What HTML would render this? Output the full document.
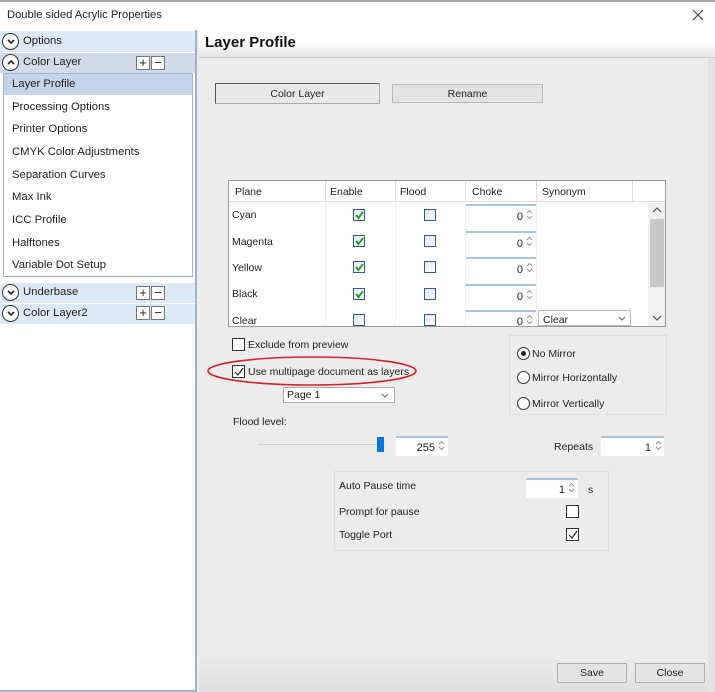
<!DOCTYPE html>
<html><head><meta charset="utf-8"><style>
*{margin:0;padding:0;box-sizing:border-box}
body{width:715px;height:692px;position:relative;overflow:hidden;background:#ececec;font-family:"Liberation Sans",sans-serif;font-size:10.5px;color:#222}
.a{position:absolute}
.t{position:absolute;white-space:nowrap}
.l{font-size:11.3px}
.cb{position:absolute;width:13px;height:13px;border:1px solid #333;background:#fff}
.gcb{position:absolute;width:12px;height:12px;border:1px solid #2b5f93;background:linear-gradient(135deg,#dfe6ee,#fff)}
.spin{position:absolute;background:#fff;border-top:2px solid #a7c4e0;text-align:right;font-size:11px}
.circ{position:absolute;width:17px;height:17px;border:1.5px solid #333;border-radius:50%;background:#fff}
.pm{position:absolute;width:14px;height:14px;border:1px solid #777;background:#fff;font-size:13px;line-height:11px;text-align:center;color:#222}
.rad{position:absolute;width:13px;height:13px;border:1px solid #333;border-radius:50%;background:#fff}
.ar{position:absolute}
</style></head><body>
<svg width="0" height="0" style="position:absolute"><defs><g id="ud"><path d="M1 4L3.5 1.5L6 4M1 7L3.5 9.5L6 7" stroke="#888" stroke-width="0.9" fill="none"/></g></defs></svg>
<div class="a" style="left:0;top:0;width:715px;height:2px;background:#aaa"></div>
<div class="a" style="left:0;top:2px;width:715px;height:28px;background:#fff"></div>
<div class="t" style="left:7px;top:9px;font-size:11.2px;color:#222">Double sided Acrylic Properties</div>
<svg class="a" style="left:692px;top:9px" width="12" height="12"><path d="M1 1L11 11M11 1L1 11" stroke="#444" stroke-width="1.2"/></svg>

<div class="a" style="left:0;top:30px;width:197px;height:662px;background:#fff;border-right:2px solid #9fb4cc;border-bottom:2px solid #9fb4cc"></div>
<div class="a" style="left:0;top:31px;width:195px;height:21px;background:#dce9f6"></div>
<div class="a" style="left:0;top:53px;width:195px;height:20px;background:#d0dce9"></div>
<div class="a" style="left:3px;top:73px;width:190px;height:204px;border:1px solid #9fb4cc;background:#fff"></div>
<div class="a" style="left:4px;top:74px;width:188px;height:21px;background:#c4d5ea"></div>
<div class="a" style="left:0;top:283px;width:195px;height:20px;background:#dce9f6"></div>
<div class="a" style="left:0;top:304px;width:195px;height:20px;background:#dce9f6"></div>
<div class="circ" style="left:2px;top:33px"></div><svg class="a" style="left:6px;top:39px" width="10" height="6"><path d="M2 1L5 4L8 1" stroke="#222" stroke-width="1.6" fill="none"/></svg>
<div class="circ" style="left:2px;top:54px"></div><svg class="a" style="left:6px;top:59px" width="10" height="6"><path d="M2 5L5 2L8 5" stroke="#222" stroke-width="1.6" fill="none"/></svg>
<div class="circ" style="left:2px;top:284px"></div><svg class="a" style="left:6px;top:290px" width="10" height="6"><path d="M2 1L5 4L8 1" stroke="#222" stroke-width="1.6" fill="none"/></svg>
<div class="circ" style="left:2px;top:305px"></div><svg class="a" style="left:6px;top:311px" width="10" height="6"><path d="M2 1L5 4L8 1" stroke="#222" stroke-width="1.6" fill="none"/></svg>
<div class="t l" style="left:23px;top:35px">Options</div>
<div class="t l" style="left:23px;top:56px">Color Layer</div>
<div class="t l" style="left:23px;top:286px">Underbase</div>
<div class="t l" style="left:23px;top:307px">Color Layer2</div>
<div class="pm" style="left:136px;top:56px">+</div><div class="pm" style="left:151px;top:56px">−</div>
<div class="pm" style="left:136px;top:286px">+</div><div class="pm" style="left:151px;top:286px">−</div>
<div class="pm" style="left:136px;top:306px">+</div><div class="pm" style="left:151px;top:306px">−</div>
<div class="t l" style="left:12px;top:78px">Layer Profile</div>
<div class="t l" style="left:12px;top:101px">Processing Options</div>
<div class="t l" style="left:12px;top:123px">Printer Options</div>
<div class="t l" style="left:12px;top:146px">CMYK Color Adjustments</div>
<div class="t l" style="left:12px;top:169px">Separation Curves</div>
<div class="t l" style="left:12px;top:191px">Max Ink</div>
<div class="t l" style="left:12px;top:214px">ICC Profile</div>
<div class="t l" style="left:12px;top:237px">Halftones</div>
<div class="t l" style="left:12px;top:259px">Variable Dot Setup</div>

<div class="a" style="left:199px;top:30px;width:516px;height:28px;background:linear-gradient(#fff,#fff 40%,#e4e4e4);border-bottom:1px solid #cfcfcf"></div>
<div class="t" style="left:205px;top:34px;font-size:15px;font-weight:bold;color:#111">Layer Profile</div>
<div class="a" style="left:708px;top:58px;width:7px;height:634px;background:#e2e2e2"></div>
<div class="a" style="left:199px;top:655px;width:509px;height:37px;background:linear-gradient(#ececec,#dedede)"></div>

<div class="a" style="left:215px;top:83px;width:165px;height:21px;border:1px solid #aaa;border-left:1px solid #555;border-top:1px solid #555;background:#e9e9e9"></div>
<div class="t" style="left:215px;top:88px;width:165px;text-align:center">Color Layer</div>
<div class="a" style="left:392px;top:84px;width:151px;height:19px;border:1px solid #b8b8b8;background:#e3e3e3"></div>
<div class="t" style="left:392px;top:88px;width:151px;text-align:center">Rename</div>

<div class="a" style="left:228px;top:180px;width:438px;height:147px;border:1px solid #999;background:#fff;overflow:hidden">
 <div class="a" style="left:0;top:0;width:438px;height:21px;background:#fff;border-bottom:1px solid #ddd"></div>
 <div class="a" style="left:96px;top:0;width:1px;height:21px;background:#ddd"></div>
 <div class="a" style="left:166px;top:0;width:1px;height:21px;background:#ddd"></div>
 <div class="a" style="left:236px;top:0;width:1px;height:21px;background:#ddd"></div>
 <div class="a" style="left:307px;top:0;width:1px;height:21px;background:#ddd"></div>
 <div class="a" style="left:403px;top:0;width:1px;height:21px;background:#ddd"></div>
 <div class="a" style="left:96px;top:21px;width:1px;height:126px;background:#f0f0f0"></div>
 <div class="a" style="left:166px;top:21px;width:1px;height:126px;background:#f0f0f0"></div>
 <div class="a" style="left:236px;top:21px;width:1px;height:126px;background:#f0f0f0"></div>
 <div class="a" style="left:307px;top:21px;width:1px;height:126px;background:#f0f0f0"></div>
 <div class="t" style="left:6px;top:5px">Plane</div>
 <div class="t" style="left:101px;top:5px">Enable</div>
 <div class="t" style="left:171px;top:5px">Flood</div>
 <div class="t" style="left:243px;top:5px">Choke</div>
 <div class="t" style="left:313px;top:5px">Synonym</div>
 <div class="a" style="left:419px;top:22px;width:18px;height:124px;background:#f0f0f0"></div>
 <div class="a" style="left:421px;top:38px;width:14px;height:68px;background:#c8c8c8"></div>
 <svg class="a" style="left:423px;top:26px" width="10" height="6"><path d="M1 5L5 1L9 5" stroke="#444" fill="none"/></svg>
 <svg class="a" style="left:423px;top:134px" width="10" height="6"><path d="M1 1L5 5L9 1" stroke="#444" fill="none"/></svg>
</div>
<div class="t" style="left:232px;top:209px">Cyan</div>
<div class="t" style="left:232px;top:236px">Magenta</div>
<div class="t" style="left:232px;top:262px">Yellow</div>
<div class="t" style="left:232px;top:288px">Black</div>
<div class="t" style="left:232px;top:315px">Clear</div>

<div class="gcb" style="left:353px;top:209px"></div><div class="gcb" style="left:353px;top:235px"></div><div class="gcb" style="left:353px;top:261px"></div><div class="gcb" style="left:353px;top:288px"></div><div class="gcb" style="left:353px;top:314px;height:12px"></div>
<svg class="a" style="left:355px;top:211px" width="9" height="9"><path d="M1 4L3.5 7L8 1" stroke="#1a9a1a" stroke-width="1.8" fill="none"/></svg>
<svg class="a" style="left:355px;top:237px" width="9" height="9"><path d="M1 4L3.5 7L8 1" stroke="#1a9a1a" stroke-width="1.8" fill="none"/></svg>
<svg class="a" style="left:355px;top:263px" width="9" height="9"><path d="M1 4L3.5 7L8 1" stroke="#1a9a1a" stroke-width="1.8" fill="none"/></svg>
<svg class="a" style="left:355px;top:290px" width="9" height="9"><path d="M1 4L3.5 7L8 1" stroke="#1a9a1a" stroke-width="1.8" fill="none"/></svg>
<div class="gcb" style="left:424px;top:209px"></div><div class="gcb" style="left:424px;top:235px"></div><div class="gcb" style="left:424px;top:261px"></div><div class="gcb" style="left:424px;top:288px"></div><div class="gcb" style="left:424px;top:314px"></div>

<div class="spin" style="left:466px;top:204px;width:70px;height:22px;padding:5px 13px 0 0">0</div>
<div class="spin" style="left:466px;top:231px;width:70px;height:22px;padding:5px 13px 0 0">0</div>
<div class="spin" style="left:466px;top:257px;width:70px;height:22px;padding:5px 13px 0 0">0</div>
<div class="spin" style="left:466px;top:284px;width:70px;height:22px;padding:5px 13px 0 0">0</div>
<div class="spin" style="left:466px;top:310px;width:70px;height:16px;padding:4px 13px 0 0">0</div>
<svg class="ar" style="left:526px;top:209px" width="7" height="11"><use href="#ud"/></svg>
<svg class="ar" style="left:526px;top:236px" width="7" height="11"><use href="#ud"/></svg>
<svg class="ar" style="left:526px;top:262px" width="7" height="11"><use href="#ud"/></svg>
<svg class="ar" style="left:526px;top:289px" width="7" height="11"><use href="#ud"/></svg>
<svg class="ar" style="left:526px;top:314px" width="7" height="11"><use href="#ud"/></svg>
<div class="a" style="left:538px;top:310px;width:93px;height:16px;border:1px solid #bbb;background:#fff"></div>
<div class="t" style="left:543px;top:314px">Clear</div>
<svg class="a" style="left:618px;top:316px" width="8" height="5"><path d="M1 1L4 4L7 1" stroke="#666" fill="none"/></svg>

<div class="cb" style="left:232px;top:338px"></div>
<div class="t" style="left:248px;top:339px">Exclude from preview</div>
<div class="cb" style="left:232px;top:365px"></div>
<svg class="a" style="left:234px;top:367px" width="10" height="10"><path d="M1 5L4 8L9 1" stroke="#222" stroke-width="1.2" fill="none"/></svg>
<div class="t" style="left:248px;top:366px">Use multipage document as layers</div>
<svg class="a" style="left:205px;top:355px" width="215" height="32"><ellipse cx="107" cy="16" rx="104" ry="14" stroke="#d8202a" stroke-width="1.6" fill="none"/></svg>
<div class="a" style="left:283px;top:387px;width:112px;height:16px;border:1px solid #aaa;background:#fff"></div>
<div class="t" style="left:287px;top:389px">Page 1</div>
<svg class="a" style="left:381px;top:393px" width="8" height="5"><path d="M1 1L4 4L7 1" stroke="#666" fill="none"/></svg>

<div class="a" style="left:509px;top:335px;width:158px;height:80px;border:1px solid #dedede"></div>
<div class="rad" style="left:517px;top:347px"></div><div class="a" style="left:521px;top:351px;width:5px;height:5px;border-radius:50%;background:#222"></div>
<div class="t" style="left:532px;top:348px">No Mirror</div>
<div class="rad" style="left:517px;top:371px"></div>
<div class="t" style="left:532px;top:372px">Mirror Horizontally</div>
<div class="rad" style="left:517px;top:397px"></div>
<div class="t" style="left:532px;top:398px">Mirror Vertically</div>

<div class="t" style="left:233px;top:416px">Flood level:</div>
<div class="a" style="left:258px;top:444px;width:125px;height:1px;background:#d0d0d0"></div>
<div class="a" style="left:377px;top:437px;width:7px;height:15px;background:#0a78d7"></div>
<div class="spin" style="left:396px;top:436px;width:52px;height:20px;padding:4px 13px 0 0">255</div>
<svg class="ar" style="left:438px;top:440px" width="7" height="11"><use href="#ud"/></svg>
<div class="t" style="left:554px;top:441px">Repeats</div>
<div class="spin" style="left:601px;top:436px;width:63px;height:20px;padding:4px 13px 0 0">1</div>
<svg class="ar" style="left:655px;top:440px" width="7" height="11"><use href="#ud"/></svg>

<div class="a" style="left:334px;top:471px;width:275px;height:80px;border:1px solid #dedede"></div>
<div class="t" style="left:339px;top:480px">Auto Pause time</div>
<div class="spin" style="left:526px;top:478px;width:52px;height:20px;padding:4px 13px 0 0">1</div>
<svg class="ar" style="left:568px;top:482px" width="7" height="11"><use href="#ud"/></svg>
<div class="t" style="left:588px;top:484px">s</div>
<div class="t" style="left:339px;top:506px">Prompt for pause</div>
<div class="cb" style="left:566px;top:505px"></div>
<div class="t" style="left:339px;top:529px">Toggle Port</div>
<div class="cb" style="left:566px;top:528px"></div>
<svg class="a" style="left:568px;top:530px" width="10" height="10"><path d="M1 5L4 8L9 1" stroke="#222" stroke-width="1.2" fill="none"/></svg>

<div class="a" style="left:557px;top:663px;width:70px;height:20px;border:1px solid #adadad;background:#e4e4e4"></div>
<div class="t" style="left:557px;top:667px;width:70px;text-align:center">Save</div>
<div class="a" style="left:635px;top:663px;width:70px;height:20px;border:1px solid #adadad;background:#e4e4e4"></div>
<div class="t" style="left:635px;top:667px;width:70px;text-align:center">Close</div>
</body></html>
